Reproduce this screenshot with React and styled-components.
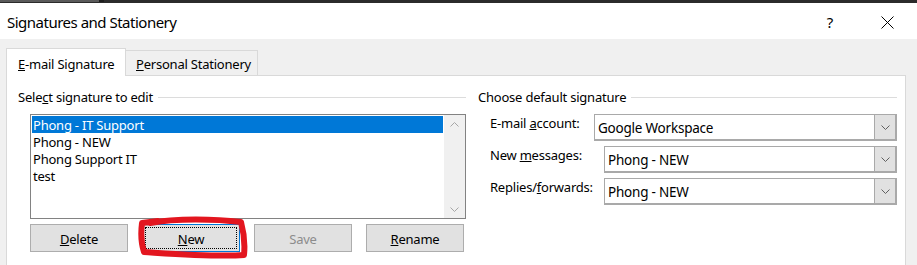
import React from "react";
import styled, { createGlobalStyle } from "styled-components";

const GlobalStyle = createGlobalStyle`
  html, body {
    margin: 0;
    padding: 0;
    background: #f0f0f0;
  }
  body {
    font-family: "Noto Sans", "Liberation Sans", sans-serif;
    font-size: 13px;
    letter-spacing: -0.22px;
    color: #000;
  }
`;

const Window = styled.div`
  width: 917px;
  height: 265px;
  overflow: hidden;
  display: flex;
  flex-direction: column;
  background: #f0f0f0;
`;

const TopStrip = styled.div`
  height: 3px;
  background: #2b2b2b;
  display: flex;
`;

const StripSegment = styled.div`
  width: 99px;
  height: 2px;
  background: #5a5a5a;
  border-right: 5px solid #1c1c1c;
`;

const TitleBar = styled.div`
  height: 36px;
  background: #fff;
  display: flex;
  align-items: center;
  padding-left: 7px;
`;

const Title = styled.div`
  flex: 1;
  font-size: 15px;
  letter-spacing: -0.5px;
  padding-top: 2px;
`;

const TitleButton = styled.div`
  width: ${(p) => p.$w}px;
  height: 100%;
  display: flex;
  align-items: center;
  justify-content: center;
  margin-right: ${(p) => p.$mr || 0}px;
  font-size: 15px;
  padding-top: 2px;
  box-sizing: border-box;
`;

const Body = styled.div`
  flex: 1;
  display: flex;
  flex-direction: column;
  padding: 9px 11px 0 6px;
`;

const TabStrip = styled.div`
  height: 27px;
  display: flex;
  align-items: flex-end;
`;

const Tab = styled.div`
  box-sizing: border-box;
  width: ${(p) => p.$w}px;
  height: ${(p) => (p.$active ? 28 : 25)}px;
  margin-bottom: ${(p) => (p.$active ? -1 : 0)}px;
  padding-left: ${(p) => (p.$active ? 11 : 10)}px;
  padding-top: ${(p) => (p.$active ? 3 : 2)}px;
  display: flex;
  align-items: center;
  background: ${(p) => (p.$active ? "#fff" : "#f0f0f0")};
  border: 1px solid #d9d9d9;
  border-bottom: none;
  border-left: ${(p) => (p.$active ? "1px solid #d9d9d9" : "none")};
  position: relative;
  z-index: ${(p) => (p.$active ? 1 : 0)};
`;

const Panel = styled.div`
  flex: 1;
  background: #fff;
  border: 1px solid #d9d9d9;
  border-bottom: none;
  padding: 12px 8px 0 11px;
  display: grid;
  grid-template-columns: 448px 419px;
  column-gap: 12px;
  align-items: start;
`;

const Group = styled.div`
  display: flex;
  flex-direction: column;
`;

const GroupHeader = styled.div`
  display: flex;
  align-items: center;
  gap: 5px;
  line-height: 18px;
  white-space: nowrap;

  &::after {
    content: "";
    flex: 1;
    height: 1px;
    background: #dcdcdc;
  }
`;

const GroupBody = styled.div`
  margin-top: 8px;
  padding-left: 12px;
  display: flex;
  flex-direction: column;
`;

const ListBox = styled.div`
  box-sizing: border-box;
  height: 105px;
  border: 1px solid #828282;
  display: flex;
`;

const ListItems = styled.div`
  flex: 1;
  padding: 1px;
`;

const ListItem = styled.div`
  height: 17px;
  line-height: 18px;
  padding-left: 1px;
  background: ${(p) => (p.$selected ? "#0078d7" : "transparent")};
  color: ${(p) => (p.$selected ? "#fff" : "#000")};
  white-space: nowrap;
`;

const ScrollBar = styled.div`
  width: 21px;
  background: #f0f0f0;
  display: flex;
  flex-direction: column;
  justify-content: space-between;
  align-items: center;
  padding: 7px 0 6px;
`;

const ButtonRow = styled.div`
  margin-top: 5px;
  display: flex;
  gap: 14px;
`;

const ButtonWrap = styled.div`
  position: relative;
`;

const Button = styled.div`
  box-sizing: border-box;
  width: 98px;
  height: 28px;
  padding-top: 1px;
  background: #e1e1e1;
  border: 1px solid ${(p) => (p.$focused ? "#0078d7" : "#adadad")};
  display: flex;
  align-items: center;
  justify-content: center;
  color: ${(p) => (p.$disabled ? "#8c8c8c" : "#000")};
  position: relative;

  ${(p) =>
    p.$focused &&
    `
    &::before {
      content: "";
      position: absolute;
      inset: 2px;
      border: 1px dotted #000;
    }
  `}
`;

const Marker = styled.svg`
  position: absolute;
  left: -6px;
  top: -7px;
  width: 116px;
  height: 42px;
  pointer-events: none;
  overflow: visible;
`;

const FieldRows = styled.div`
  display: flex;
  flex-direction: column;
  gap: 5px;
`;

const FieldRow = styled.div`
  display: flex;
  align-items: flex-start;
`;

const FieldLabel = styled.div`
  width: ${(p) => p.$w}px;
  line-height: 18px;
  white-space: nowrap;
`;

const Combo = styled.div`
  box-sizing: border-box;
  flex: 1;
  height: 27px;
  border: 1px solid #a9a9a9;
  border-right-width: 2px;
  border-bottom-width: 2px;
  display: flex;
`;

const ComboValue = styled.div`
  flex: 1;
  display: flex;
  align-items: center;
  padding-left: 3px;
  padding-top: 2px;
  font-size: 13.5px;
`;

const ComboButton = styled.div`
  width: 20px;
  background: #e1e1e1;
  border-left: 1px solid #a9a9a9;
  display: flex;
  align-items: center;
  justify-content: center;
`;

const Chevron = ({ up, color = "#606060" }) => (
  <svg width="9" height="5" viewBox="0 0 9 5">
    <path
      d={up ? "M0.5 4.5 L4.5 0.5 L8.5 4.5" : "M0.5 0.5 L4.5 4.5 L8.5 0.5"}
      fill="none"
      stroke={color}
      strokeWidth="1"
    />
  </svg>
);

const CloseIcon = () => (
  <svg width="13" height="13" viewBox="0 0 13 13">
    <path d="M0.5 0.5 L12.5 12.5 M12.5 0.5 L0.5 12.5" stroke="#000" strokeWidth="1" />
  </svg>
);

const signatures = ["Phong - IT Support", "Phong - NEW", "Phong Support IT", "test"];

export default function App() {
  return (
    <>
      <GlobalStyle />
      <Window>
        <TopStrip>
          <StripSegment />
        </TopStrip>
        <TitleBar>
          <Title>Signatures and Stationery</Title>
          <TitleButton $w={46} $mr={7}>?</TitleButton>
          <TitleButton $w={54} $mr={3}>
            <CloseIcon />
          </TitleButton>
        </TitleBar>

        <Body>
          <TabStrip>
            <Tab $active $w={120}>
              <span>
                <u>E</u>-mail Signature
              </span>
            </Tab>
            <Tab $w={132}>
              <span>
                <u>P</u>ersonal Stationery
              </span>
            </Tab>
          </TabStrip>

          <Panel>
            <Group>
              <GroupHeader>
                <span>
                  Sele<u>c</u>t signature to edit
                </span>
              </GroupHeader>
              <GroupBody>
                <ListBox>
                  <ListItems>
                    {signatures.map((s, i) => (
                      <ListItem key={s} $selected={i === 0}>
                        {s}
                      </ListItem>
                    ))}
                  </ListItems>
                  <ScrollBar>
                    <Chevron up color="#a6a6a6" />
                    <Chevron color="#a6a6a6" />
                  </ScrollBar>
                </ListBox>
                <ButtonRow>
                  <Button>
                    <span>
                      <u>D</u>elete
                    </span>
                  </Button>
                  <ButtonWrap>
                    <Button $focused>
                      <span>
                        <u>N</u>ew
                      </span>
                    </Button>
                    <Marker viewBox="0 0 116 42">
                      <path
                        d="M14 6 C40 1, 80 2, 105 5 C108 16, 109 28, 108 38 C80 40, 40 37, 8 35 C5 26, 5 14, 6 6 L22 4"
                        fill="none"
                        stroke="#e3161f"
                        strokeWidth="6"
                        strokeLinecap="round"
                        strokeLinejoin="round"
                      />
                    </Marker>
                  </ButtonWrap>
                  <Button $disabled>Save</Button>
                  <Button>
                    <span>
                      <u>R</u>ename
                    </span>
                  </Button>
                </ButtonRow>
              </GroupBody>
            </Group>

            <Group>
              <GroupHeader>
                <span>Choose default signature</span>
              </GroupHeader>
              <GroupBody>
                <FieldRows>
                  <FieldRow>
                    <FieldLabel $w={104}>
                      E-mail <u>a</u>ccount:
                    </FieldLabel>
                    <Combo>
                      <ComboValue>Google Workspace</ComboValue>
                      <ComboButton>
                        <Chevron />
                      </ComboButton>
                    </Combo>
                  </FieldRow>
                  <FieldRow>
                    <FieldLabel $w={114}>
                      New <u>m</u>essages:
                    </FieldLabel>
                    <Combo>
                      <ComboValue>Phong - NEW</ComboValue>
                      <ComboButton>
                        <Chevron />
                      </ComboButton>
                    </Combo>
                  </FieldRow>
                  <FieldRow>
                    <FieldLabel $w={114}>
                      Replies/<u>f</u>orwards:
                    </FieldLabel>
                    <Combo>
                      <ComboValue>Phong - NEW</ComboValue>
                      <ComboButton>
                        <Chevron />
                      </ComboButton>
                    </Combo>
                  </FieldRow>
                </FieldRows>
              </GroupBody>
            </Group>
          </Panel>
        </Body>
      </Window>
    </>
  );
}
